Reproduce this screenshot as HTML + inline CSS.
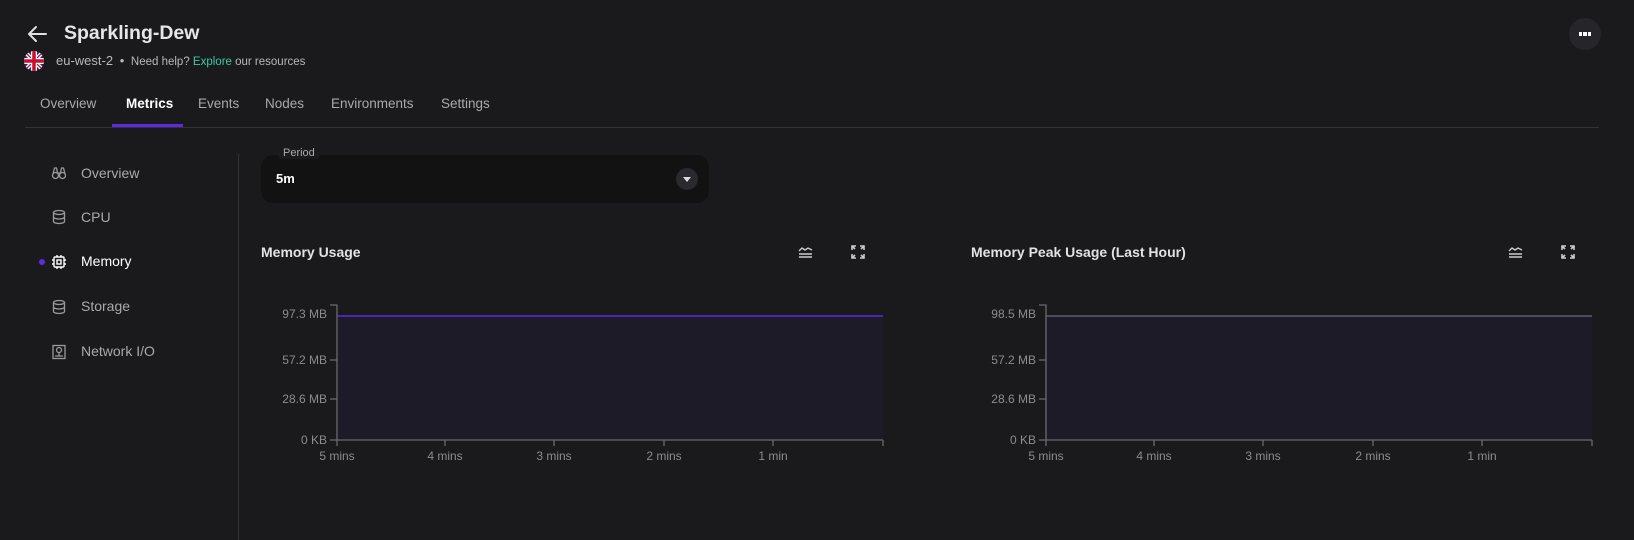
<!DOCTYPE html>
<html><head><meta charset="utf-8"><style>
*{margin:0;padding:0;box-sizing:border-box}
body{width:1634px;height:540px;background:#1a1a1c;font-family:"Liberation Sans",sans-serif;color:#c8c8cc;position:relative;overflow:hidden}
.a{position:absolute;white-space:nowrap}
.tab{position:absolute;top:96px;font-size:13.5px;color:#a9a9ae}
.side{position:absolute;left:81px;font-size:14px;color:#a9a9ae}
.si{position:absolute;left:51px}
</style></head><body>
<svg class="a" style="left:26px;top:24px" width="22" height="20" viewBox="0 0 22 20"><path d="M20 10H3M10 3L3 10l7 7" stroke="#e0e0e0" stroke-width="2" fill="none" stroke-linecap="round" stroke-linejoin="round"/></svg>
<div class="a" style="left:64px;top:22px;font-size:19.5px;font-weight:bold;color:#e6e6e8">Sparkling-Dew</div>
<svg class="a" style="left:24px;top:51px" width="20" height="20" viewBox="0 0 20 20"><clipPath id="c"><circle cx="10" cy="10" r="10"/></clipPath><g clip-path="url(#c)"><rect width="20" height="20" fill="#26297a"/><path d="M0 0L20 20M20 0L0 20" stroke="#fff" stroke-width="4"/><path d="M0 0L20 20M20 0L0 20" stroke="#c8102e" stroke-width="1.3"/><path d="M10 0V20M0 10H20" stroke="#fff" stroke-width="6"/><path d="M10 0V20M0 10H20" stroke="#c8102e" stroke-width="3.5"/></g></svg>
<div class="a" style="left:56px;top:53px;font-size:13px;color:#b8b8bc">eu-west-2 <span style="margin:0 3px">•</span> <span style="font-size:11.5px">Need help? <span style="color:#3ec9a7">Explore</span> our resources</span></div>
<div class="tab" style="left:40px">Overview</div>
<div class="tab" style="left:126px;color:#fff;font-weight:bold">Metrics</div>
<div class="tab" style="left:198px">Events</div>
<div class="tab" style="left:265px">Nodes</div>
<div class="tab" style="left:331px">Environments</div>
<div class="tab" style="left:441px">Settings</div>
<div class="a" style="left:25px;top:127px;width:1574px;height:1px;background:#333336"></div>
<div class="a" style="left:112px;top:124px;width:71px;height:3px;background:#5b2be0"></div>
<div class="a" style="left:1569px;top:18px;width:32px;height:32px;border-radius:50%;background:#26262a"></div>
<div class="a" style="left:1579px;top:32px;width:12px;height:4px;display:flex;gap:1px"><i style="width:3.3px;height:3.5px;background:#fff"></i><i style="width:3.3px;height:3.5px;background:#fff"></i><i style="width:3.3px;height:3.5px;background:#fff"></i></div>

<svg class="si" style="top:165px" width="16" height="16" viewBox="0 0 16 16" fill="none" stroke="#999" stroke-width="1.3"><circle cx="4.5" cy="10.5" r="3"/><circle cx="11.5" cy="10.5" r="3"/><path d="M2 9l1.5-6h2l1 5M14 9l-1.5-6h-2l-1 5M6.5 8h3"/></svg>
<div class="side" style="top:165px">Overview</div>
<svg class="si" style="top:209px" width="16" height="16" viewBox="0 0 16 16" fill="none" stroke="#999" stroke-width="1.3"><ellipse cx="8" cy="3.5" rx="5.5" ry="2"/><path d="M2.5 3.5v9c0 1.1 2.5 2 5.5 2s5.5-.9 5.5-2v-9M2.5 8c0 1.1 2.5 2 5.5 2s5.5-.9 5.5-2"/></svg>
<div class="side" style="top:209px">CPU</div>
<div class="a" style="left:39px;top:259px;width:6px;height:6px;border-radius:50%;background:#5b2be0"></div>
<svg class="si" style="top:254px" width="16" height="16" viewBox="0 0 16 16" fill="none" stroke="#fff" stroke-width="1.4"><rect x="3" y="3" width="10" height="10" rx="1"/><rect x="6" y="6" width="4" height="4"/><path d="M6 1v2M10 1v2M6 13v2M10 13v2M1 6h2M1 10h2M13 6h2M13 10h2"/></svg>
<div class="side" style="top:253px;color:#fff">Memory</div>
<svg class="si" style="top:299px" width="16" height="16" viewBox="0 0 16 16" fill="none" stroke="#999" stroke-width="1.3"><ellipse cx="8" cy="3.5" rx="5.5" ry="2"/><path d="M2.5 3.5v9c0 1.1 2.5 2 5.5 2s5.5-.9 5.5-2v-9M2.5 8c0 1.1 2.5 2 5.5 2s5.5-.9 5.5-2"/></svg>
<div class="side" style="top:298px">Storage</div>
<svg class="si" style="top:344px" width="16" height="16" viewBox="0 0 16 16" fill="none" stroke="#999" stroke-width="1.3"><rect x="2" y="1.5" width="12" height="13"/><circle cx="8" cy="6" r="2.5"/><path d="M8 8.5v3M4 12h8"/></svg>
<div class="side" style="top:343px">Network I/O</div>
<div class="a" style="left:238px;top:154px;width:1px;height:386px;background:#333336"></div>

<div class="a" style="left:261px;top:155px;width:448px;height:48px;border-radius:12px;background:#121213"></div>
<div class="a" style="left:278px;top:147px;padding:0 5px;font-size:11px;color:#aaa;background:#1a1a1c;border-radius:4px">Period</div>
<div class="a" style="left:276px;top:171px;font-size:13px;color:#fff;font-weight:bold">5m</div>
<div class="a" style="left:676px;top:168px;width:22px;height:22px;border-radius:50%;background:#2a2a2e"></div>
<div class="a" style="left:683px;top:177px;width:0;height:0;border-left:4px solid transparent;border-right:4px solid transparent;border-top:5px solid #ddd"></div>

<div class="a" style="left:261px;top:244px;font-size:14px;font-weight:bold;color:#e2e2e4">Memory Usage</div>
<div class="a" style="left:971px;top:244px;font-size:14px;font-weight:bold;color:#e2e2e4">Memory Peak Usage (Last Hour)</div>

<svg class="a" style="left:0;top:0" width="1634" height="540">
<defs>
<g id="ic1"><path d="M-7 -1l3-3 3 2 3-2 4 2" stroke="#ccc" stroke-width="1.4" fill="none"/><path d="M-7 2h13M-7 5h13" stroke="#ccc" stroke-width="1.4"/></g>
<g id="ic2" stroke="#ccc" stroke-width="1.6" fill="none"><path d="M-6 -2v-4h4M-6 -6l3 3M6 -2v-4h-4M6 -6l-3 3M-6 2v4h4M-6 6l3-3M6 2v4h-4M6 6l-3-3"/></g>
</defs>
<use href="#ic1" x="806" y="252"/><use href="#ic2" x="858" y="252"/>
<use href="#ic1" x="1516" y="252"/><use href="#ic2" x="1568" y="252"/>
<g font-family="Liberation Sans" font-size="12" fill="#8c8c90">
<rect x="337" y="316" width="546" height="124" fill="#1d1b27"/>
<path d="M337 316H883" stroke="#5b2be0" stroke-width="1.5"/>
<path d="M330 305h7v135h546M330 360h7M330 399h7M330 440h7M337 440v6M445 440v6M554 440v6M664 440v6M773 440v6M883 440v6" stroke="#6a6a6e" stroke-width="1.3" fill="none"/>
<g text-anchor="end"><text x="327" y="318">97.3 MB</text><text x="327" y="364">57.2 MB</text><text x="327" y="403">28.6 MB</text><text x="327" y="444">0 KB</text></g>
<g text-anchor="middle"><text x="337" y="460">5 mins</text><text x="445" y="460">4 mins</text><text x="554" y="460">3 mins</text><text x="664" y="460">2 mins</text><text x="773" y="460">1 min</text></g>

<rect x="1046" y="316" width="546" height="124" fill="#1d1b27"/>
<path d="M1046 316H1592" stroke="#6a6a78" stroke-width="1.3"/>
<path d="M1039 305h7v135h546M1039 360h7M1039 399h7M1039 440h7M1046 440v6M1154 440v6M1263 440v6M1373 440v6M1482 440v6M1592 440v6" stroke="#6a6a6e" stroke-width="1.3" fill="none"/>
<g text-anchor="end"><text x="1036" y="318">98.5 MB</text><text x="1036" y="364">57.2 MB</text><text x="1036" y="403">28.6 MB</text><text x="1036" y="444">0 KB</text></g>
<g text-anchor="middle"><text x="1046" y="460">5 mins</text><text x="1154" y="460">4 mins</text><text x="1263" y="460">3 mins</text><text x="1373" y="460">2 mins</text><text x="1482" y="460">1 min</text></g>
</g>
</svg>
</body></html>
